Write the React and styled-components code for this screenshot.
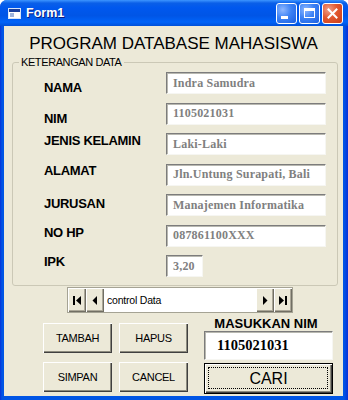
import React from 'react';
import styled, { createGlobalStyle } from 'styled-components';

const GlobalStyle = createGlobalStyle`
  html, body {
    margin: 0;
    padding: 0;
    background: #ffffff;
  }
  * {
    box-sizing: border-box;
  }
`;

const fields = [
  { label: 'NAMA', value: 'Indra Samudra', shift: 5 },
  { label: 'NIM', value: '1105021031', shift: 5 },
  { label: 'JENIS KELAMIN', value: 'Laki-Laki', shift: -3 },
  { label: 'ALAMAT', value: 'Jln.Untung Surapati, Bali', shift: -4 },
  { label: 'JURUSAN', value: 'Manajemen Informatika', shift: -1 },
  { label: 'NO HP', value: '087861100XXX', shift: -3 },
  { label: 'IPK', value: '3,20', shift: -4, short: true },
];

const FormIcon = () => (
  <svg width="13" height="11" viewBox="0 0 13 11">
    <rect x="0.5" y="0.5" width="12" height="10" fill="#ffffff" stroke="#d8e4f8" />
    <rect x="1" y="1" width="11" height="3" fill="#1a3f9c" />
    <rect x="2" y="5" width="4" height="4" fill="#9fb4dc" />
  </svg>
);

const NavIcon = ({ dir, end }) => (
  <svg width="10" height="11" viewBox="0 0 10 11">
    {dir === 'left' ? (
      <>
        {end && <rect x="1" y="1" width="2" height="9" fill="#000" />}
        <polygon points={end ? '9,1 4,5.5 9,10' : '7,1 2.5,5.5 7,10'} fill="#000" />
      </>
    ) : (
      <>
        <polygon points={end ? '1,1 6,5.5 1,10' : '3,1 7.5,5.5 3,10'} fill="#000" />
        {end && <rect x="7" y="1" width="2" height="9" fill="#000" />}
      </>
    )}
  </svg>
);

const App = () => {
  return (
    <>
      <GlobalStyle />
      <Window>
        <TitleBar>
          <IconSlot>
            <FormIcon />
          </IconSlot>
          <Caption>Form1</Caption>
          <CaptionButtons>
            <CapButton>
              <MinGlyph />
            </CapButton>
            <CapButton>
              <MaxGlyph />
            </CapButton>
            <CapButton close>
              <svg width="11" height="11" viewBox="0 0 11 11">
                <path d="M1.5 1.5 L9.5 9.5 M9.5 1.5 L1.5 9.5" stroke="#fff" strokeWidth="2" strokeLinecap="square" />
              </svg>
            </CapButton>
          </CaptionButtons>
        </TitleBar>

        <Client>
          <Heading>PROGRAM DATABASE MAHASISWA</Heading>

          <Frame>
            <Legend>KETERANGAN DATA</Legend>
            <FieldGrid>
              {fields.map(f => (
                <React.Fragment key={f.label}>
                  <FieldLabel shift={f.shift}>{f.label}</FieldLabel>
                  <TextBox short={f.short}>{f.value}</TextBox>
                </React.Fragment>
              ))}
            </FieldGrid>
          </Frame>

          <DataControl>
            <NavButton><NavIcon dir="left" end /></NavButton>
            <NavButton><NavIcon dir="left" /></NavButton>
            <NavCaption>control Data</NavCaption>
            <NavButton><NavIcon dir="right" /></NavButton>
            <NavButton><NavIcon dir="right" end /></NavButton>
          </DataControl>

          <BottomArea>
            <ButtonGrid>
              <CmdButton>TAMBAH</CmdButton>
              <CmdButton>HAPUS</CmdButton>
              <CmdButton>SIMPAN</CmdButton>
              <CmdButton>CANCEL</CmdButton>
            </ButtonGrid>
            <SearchColumn>
              <SearchLabel>MASUKKAN NIM</SearchLabel>
              <SearchBox>1105021031</SearchBox>
              <SearchButton>CARI</SearchButton>
            </SearchColumn>
          </BottomArea>
        </Client>
      </Window>
    </>
  );
};

export default App;

const Window = styled.div`
  width: 348px;
  height: 400px;
  display: flex;
  flex-direction: column;
  background: linear-gradient(90deg, #0831d9 0px, #0055e5 2px, #0055e5 344px, #0831d9 348px);
  border-radius: 7px 7px 0 0;
  overflow: hidden;
`;

const TitleBar = styled.div`
  height: 26px;
  display: flex;
  align-items: center;
  padding: 0 5px 0 8px;
  background: linear-gradient(
    180deg,
    #3d95ff 0%,
    #0a5fe8 12%,
    #0058ee 30%,
    #0055e6 60%,
    #0063f8 85%,
    #0050d8 100%
  );
`;

const IconSlot = styled.div`
  width: 13px;
  height: 11px;
  display: flex;
  margin-top: 1px;
`;

const Caption = styled.div`
  margin-left: 5px;
  flex: 1;
  font-family: 'Liberation Sans', Arial, sans-serif;
  font-weight: bold;
  font-size: 12.5px;
  color: #ffffff;
  text-shadow: 1px 1px #0a1e80;
`;

const CaptionButtons = styled.div`
  display: flex;
  gap: 2px;
`;

const CapButton = styled.div`
  width: 21px;
  height: 21px;
  border: 1px solid #ffffff;
  border-radius: 3px;
  display: flex;
  align-items: center;
  justify-content: center;
  background: ${p =>
    p.close
      ? 'radial-gradient(circle at 30% 30%, #f0a08a 0%, #e2582f 45%, #c63d1a 100%)'
      : 'radial-gradient(circle at 30% 30%, #8fb8ff 0%, #3c82f5 45%, #1b5fe0 100%)'};
`;

const MinGlyph = styled.div`
  width: 7px;
  height: 3px;
  background: #ffffff;
  align-self: flex-end;
  margin: 0 5px 4px 0;
`;

const MaxGlyph = styled.div`
  width: 11px;
  height: 10px;
  border: 1px solid #ffffff;
  border-top-width: 3px;
`;

const Client = styled.div`
  flex: 1;
  margin: 0 5px 4px 4px;
  background: #ece9d8;
  display: flex;
  flex-direction: column;
  font-family: 'Liberation Sans', Arial, sans-serif;
  color: #000000;
`;

const Heading = styled.div`
  margin-top: 8px;
  height: 20px;
  line-height: 20px;
  font-size: 17px;
  text-align: center;
`;

const Frame = styled.fieldset`
  margin: 2px 5px 0 8px;
  padding: 3px 0 8px 6px;
  border: 1px solid #cbc8b6;
  border-radius: 3px;
  min-width: 0;
`;

const Legend = styled.legend`
  padding: 0 2px;
  font-size: 11px;
  line-height: 13px;
  letter-spacing: -0.4px;
`;

const FieldGrid = styled.div`
  margin-left: 25px;
  display: grid;
  grid-template-columns: 122px auto;
  grid-auto-rows: 22px;
  row-gap: 8.5px;
`;

const FieldLabel = styled.div`
  align-self: start;
  margin-top: ${p => p.shift}px;
  line-height: 22px;
  font-size: 13px;
  font-weight: bold;
  letter-spacing: -0.3px;
  white-space: nowrap;
`;

const TextBox = styled.div`
  width: ${p => (p.short ? '37px' : '160px')};
  height: 22px;
  padding-left: 6px;
  display: flex;
  align-items: center;
  background: #ffffff;
  border: 1px solid;
  border-color: #7c7c7c #f6f6f2 #f6f6f2 #7c7c7c;
  box-shadow: inset 1px 1px #b8b8b0;
  font-family: 'Liberation Serif', 'Times New Roman', serif;
  font-weight: bold;
  font-size: 12px;
  letter-spacing: 0.2px;
  color: #808080;
  white-space: nowrap;
  overflow: hidden;
`;

const DataControl = styled.div`
  margin: 1px 0 0 63px;
  width: 226px;
  height: 26px;
  display: flex;
  border: 1px solid #a5a394;
  background: #ece9d8;
`;

const NavButton = styled.div`
  width: 18px;
  display: flex;
  align-items: center;
  justify-content: center;
  background: #ece9d8;
  box-shadow: inset 1px 1px #ffffff, inset -1px -1px #716f64, inset -2px -2px #aca899;
`;

const NavCaption = styled.div`
  flex: 1;
  display: flex;
  align-items: center;
  padding-left: 3px;
  background: #ffffff;
  font-size: 10.5px;
  letter-spacing: -0.2px;
`;

const BottomArea = styled.div`
  margin: 4px 0 0 39px;
  display: flex;
  gap: 16px;
`;

const ButtonGrid = styled.div`
  margin-top: 6px;
  display: grid;
  grid-template-columns: 69px 69px;
  grid-auto-rows: 30px;
  column-gap: 7px;
  row-gap: 9px;
  align-content: start;
`;

const CmdButton = styled.div`
  display: flex;
  align-items: center;
  justify-content: center;
  background: #ece9d8;
  box-shadow: inset 1px 1px #ffffff, inset -1px -1px #404040, inset -2px -2px #8d8b7e;
  font-size: 11px;
  letter-spacing: -0.3px;
`;

const SearchColumn = styled.div`
  width: 129px;
  display: flex;
  flex-direction: column;
`;

const SearchLabel = styled.div`
  height: 14px;
  line-height: 14px;
  padding-right: 5px;
  text-align: center;
  font-size: 13px;
  font-weight: bold;
`;

const SearchBox = styled.div`
  height: 29px;
  padding-left: 12px;
  display: flex;
  align-items: center;
  background: #ffffff;
  border: 1px solid;
  border-color: #7c7c7c #f6f6f2 #f6f6f2 #7c7c7c;
  box-shadow: inset 1px 1px #b8b8b0;
  font-family: 'Liberation Serif', 'Times New Roman', serif;
  font-weight: bold;
  font-size: 14.5px;
`;

const SearchButton = styled.div`
  margin-top: 3px;
  height: 31px;
  position: relative;
  display: flex;
  align-items: center;
  justify-content: center;
  background: #ece9d8;
  border: 1px solid #000000;
  box-shadow: inset 1px 1px #ffffff, inset -1px -1px #404040, inset -2px -2px #8d8b7e;
  font-size: 16px;

  &::after {
    content: '';
    position: absolute;
    inset: 3px 4px 4px 3px;
    border: 1px dotted #000000;
  }
`;
